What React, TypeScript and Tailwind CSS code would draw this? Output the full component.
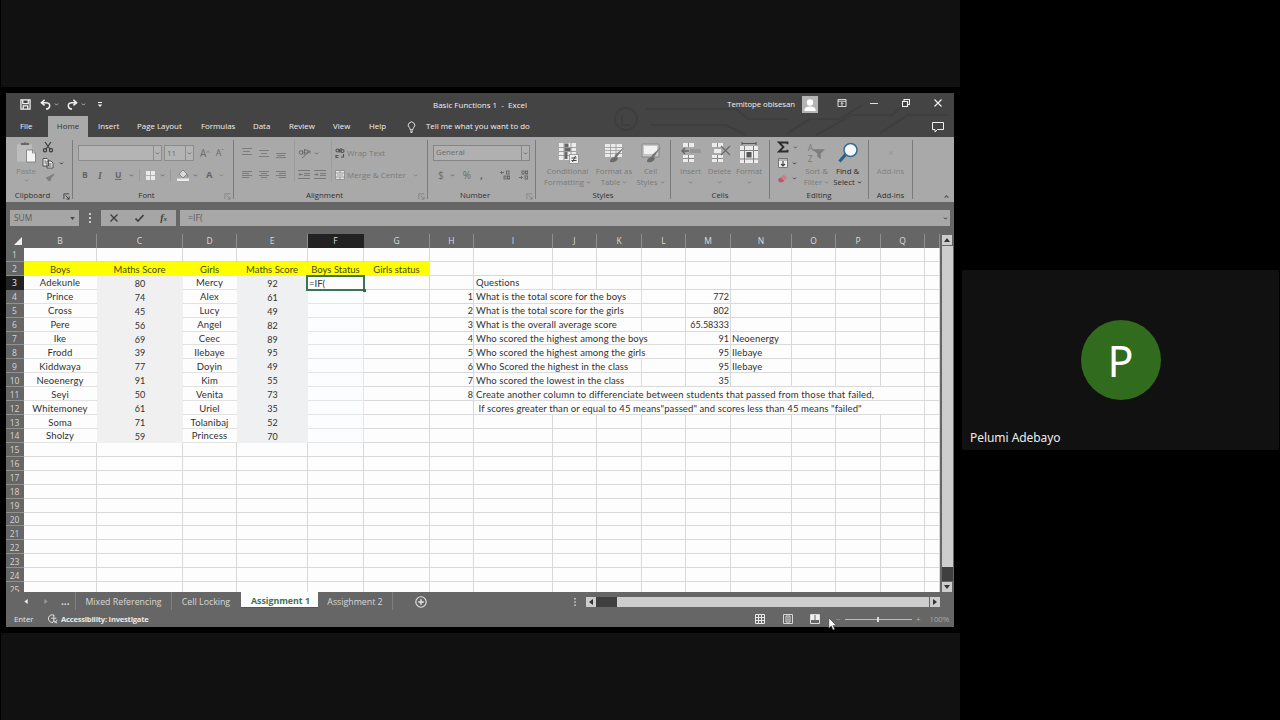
import React from "react";
import type { ReactNode } from "react";

type Column = { id: string; w: number };

const COLUMNS: Column[] = [
  { id: "B", w: 73 },
  { id: "C", w: 86 },
  { id: "D", w: 54 },
  { id: "E", w: 71 },
  { id: "F", w: 56 },
  { id: "G", w: 66 },
  { id: "H", w: 44 },
  { id: "I", w: 79 },
  { id: "J", w: 44 },
  { id: "K", w: 45 },
  { id: "L", w: 44 },
  { id: "M", w: 45 },
  { id: "N", w: 61 },
  { id: "O", w: 44 },
  { id: "P", w: 45 },
  { id: "Q", w: 44 },
  { id: "R", w: 15 },
];

const SCORES: [string, number, string, number][] = [
  ["Adekunle", 80, "Mercy", 92],
  ["Prince", 74, "Alex", 61],
  ["Cross", 45, "Lucy", 49],
  ["Pere", 56, "Angel", 82],
  ["Ike", 69, "Ceec", 89],
  ["Frodd", 39, "Ilebaye", 95],
  ["Kiddwaya", 77, "Doyin", 49],
  ["Neoenergy", 91, "Kim", 55],
  ["Seyi", 50, "Venita", 73],
  ["Whitemoney", 61, "Uriel", 35],
  ["Soma", 71, "Tolanibaj", 52],
  ["Sholzy", 59, "Princess", 70],
];

const HEADERS: Record<string, string> = {
  B: "Boys",
  C: "Maths Score",
  D: "Girls",
  E: "Maths Score",
  F: "Boys Status",
  G: "Girls status",
};

type Question = { no?: string; text: string; span: number; m?: string; n?: string };

const QUESTIONS: Record<number, Question> = {
  3: { text: "Questions", span: 1 },
  4: { no: "1", text: "What is the total score for the boys", span: 3, m: "772" },
  5: { no: "2", text: "What is the total score for the girls", span: 3, m: "802" },
  6: { no: "3", text: "What is the overall average score", span: 3, m: "65.58333" },
  7: { no: "4", text: "Who scored the highest among the boys", span: 4, m: "91", n: "Neoenergy" },
  8: { no: "5", text: "Who scored the highest among the girls", span: 4, m: "95", n: "Ilebaye" },
  9: { no: "6", text: "Who Scored the highest in the class", span: 3, m: "95", n: "Ilebaye" },
  10: { no: "7", text: "Who scored the lowest in the class", span: 3, m: "35" },
  11: {
    no: "8",
    text: "Create another column to differenciate between students that passed from those that failed,",
    span: 9,
  },
  12: {
    text: ' If scores greater than or equal to 45 means"passed" and scores less than 45 means "failed"',
    span: 9,
  },
};

function cellFor(id: string, row: number): { text: string; cls: string } {
  const line = "border-r border-b border-[#d9d9d9] ";
  const num = "text-[9px] tracking-normal ";
  if (row === 2 && HEADERS[id]) return { text: HEADERS[id], cls: "justify-center bg-[#ffff00] pr-px tracking-normal text-[#4a4a10]" };
  const s = row >= 3 && row <= 14 ? SCORES[row - 3] : undefined;
  if (s) {
    if (id === "B") return { text: s[0], cls: "justify-center border-b border-[#e2e2e2] pr-px" };
    if (id === "C") return { text: String(s[1]), cls: num + "justify-center bg-[#f0f0f0]" };
    if (id === "D") return { text: s[2], cls: "justify-center border-b border-[#e2e2e2] pr-px" };
    if (id === "E") return { text: String(s[3]), cls: num + "justify-center bg-[#eff0f1]" };
    if (id === "F" && row === 3) return { text: "=IF(", cls: "pl-px tracking-normal" };
    if (id === "F") return { text: "", cls: "border-r border-b border-[#e3e6e7] bg-[#fcfdfe]" };
  }
  const q = QUESTIONS[row];
  if (q) {
    if (id === "H") return { text: q.no ?? "", cls: line + num + "justify-end" };
    if (id === "M" && q.span < 5) return { text: q.m ?? "", cls: line + num + "justify-end pr-px" };
    if (id === "N" && q.span < 5) return { text: q.n ?? "", cls: line + "pl-px" };
  }
  return { text: "", cls: line };
}

function SheetRow({ row }: { row: number }) {
  const q = QUESTIONS[row];
  const cells: ReactNode[] = [];
  for (let i = 0; i < COLUMNS.length; i++) {
    const c = COLUMNS[i];
    if (c.id === "I" && q) {
      let w = 0;
      for (let k = 0; k < q.span; k++) w += COLUMNS[i + k].w;
      cells.push(
        <div
          key={c.id}
          style={{ width: w }}
          className={
            "flex shrink-0 items-center border-r border-b border-[#dcdcdc] pt-[2px] pl-[2px] whitespace-pre " +
            (row === 11 ? "tracking-[0.16px]" : "tracking-[0.1px]")
          }
        >
          {q.text}
        </div>
      );
      i += q.span - 1;
      continue;
    }
    const cell = cellFor(c.id, row);
    const active = c.id === "F" && row === 3;
    cells.push(
      <div
        key={c.id}
        style={{ width: c.w }}
        className={"relative flex shrink-0 items-center pt-[2px] whitespace-pre " + (active ? "z-10 " : "") + cell.cls}
      >
        {cell.text}
        {active && (
          <div className="absolute -top-px -left-[2px] h-[16px] w-[59px] border-2 border-[#3a7556]">
            <div className="absolute -right-[3px] -bottom-[3px] size-[3px] bg-[#2e6b4a]" />
          </div>
        )}
      </div>
    );
  }
  return (
    <div className="flex h-[13.93px] shrink-0">
      <div
        className={
          "flex w-[18px] shrink-0 items-center justify-center border-b pt-[2px] pr-px font-['Open_Sans',sans-serif] text-[8.5px] tracking-normal " +
          (row === 3 ? "border-[#222] bg-[#222] text-[#e8e8e8]" : "border-[#909090] text-[#d4d4d4]")
        }
      >
        {row}
      </div>
      {cells}
    </div>
  );
}

function Caret({ className = "" }: { className?: string }) {
  return (
    <svg viewBox="0 0 6 4" className={"h-[3px] w-[5px] shrink-0 " + className} fill="none" stroke="currentColor" strokeWidth="1.3">
      <path d="M1 .8 3 2.8 5 .8" />
    </svg>
  );
}

function Group({ className, label, launcher, dim, children }: { className: string; label: string; launcher?: boolean; dim?: boolean; children: ReactNode }) {
  return (
    <div className={"flex h-[65px] shrink-0 flex-col pt-[3px] " + className}>
      <div className="flex h-[59px] flex-1 flex-col border-r border-[#7b7b7b]">
        <div className="h-[49px] shrink-0">{children}</div>
        <div
          className={
            "relative flex h-[12px] items-center justify-center pt-[2px] text-[7.8px] font-medium text-[#303030] " +
            (launcher ? "pr-[13px]" : "")
          }
        >
          {label}
          {launcher && (
            <svg viewBox="0 0 8 8" className={"absolute right-[2px] bottom-px size-[7px] " + (dim ? "text-[#828282]" : "text-[#3d3d3d]")} fill="none" stroke="currentColor" strokeWidth="1">
              <path d="M1 7V1h6M3 3l4 4M7 4v3H4" />
            </svg>
          )}
        </div>
      </div>
      <div className="h-[3px]" />
    </div>
  );
}

function BigButton({ icon, lines, className, caret, dark }: { icon: ReactNode; lines: string[]; className: string; caret?: boolean; dark?: boolean }) {
  return (
    <div className={"flex shrink-0 flex-col items-center text-[7.8px] leading-[11px] " + className + (dark ? " text-[#2c2c2c]" : " text-[#7a7a7a]")}>
      <div className="flex h-[26px] items-center justify-center">{icon}</div>
      {lines.map((l, i) => (
        <div key={l} className="flex items-center gap-[2px] whitespace-nowrap">
          {l}
          {caret && i === lines.length - 1 && lines.length > 1 && <Caret />}
        </div>
      ))}
      {caret && lines.length === 1 && <Caret className="mt-[4px]" />}
    </div>
  );
}

function Lines({ rows }: { rows: [number, number, number][] }) {
  return (
    <svg viewBox="0 0 12 12" className="size-[12px] shrink-0 text-[#7c7c7c]" stroke="currentColor" strokeWidth="1">
      {rows.map(([x, y, w]) => (
        <path key={y} d={`M${x} ${y}h${w}`} />
      ))}
    </svg>
  );
}

function Indent({ right }: { right?: boolean }) {
  return (
    <svg viewBox="0 0 12 12" className="size-[12px] shrink-0 text-[#7a7a7a]" fill="none" stroke="currentColor" strokeWidth="1">
      <path d="M0 1.5h12M6 4.5h6M6 6.5h6M0 9.5h12" />
      <path d={right ? "M0 5.5h4M2.5 4l1.5 1.5L2.5 7" : "M5 5.5H1M2.5 4 1 5.5 2.500 7"} />
    </svg>
  );
}

function Ribbon() {
  return (
    <div className="flex h-[65px] shrink-0 bg-[#a9a9a9] text-[#6a6a6a]">
      <Group className="w-[67px]" label="Clipboard" launcher>
        <div className="flex">
          <div className="ml-[9px] flex w-[22px] flex-col items-center">
            <svg viewBox="0 0 22 24" className="h-[25px] w-[22px]">
              <rect x="2" y="4" width="15" height="17" fill="#bdbdbd" />
              <path d="M6 4.5V2.5h2.5a2 2 0 0 1 3 0H14v2z" fill="#666" />
              <path d="M11.5 9.5h6l3 3v9h-9z" fill="#f3f3f3" stroke="#777" strokeWidth=".8" />
              <path d="M17.5 9.5v3h3" fill="none" stroke="#777" strokeWidth=".8" />
            </svg>
            <span className="text-[7.8px] leading-[12px] text-[#828282]">Paste</span>
            <Caret className="mt-[2px] text-[#858585]" />
          </div>
          <div className="ml-[5px] flex flex-col gap-[4px]">
            <svg viewBox="0 0 12 12" className="mt-px size-[12px]" fill="none" stroke="#3c3c3c" strokeWidth="1.2">
              <path d="M3 1l5 7M9 1 4 8" />
              <circle cx="3" cy="9.3" r="1.6" />
              <circle cx="9" cy="9.3" r="1.6" />
            </svg>
            <div className="flex items-center gap-[5px]">
              <svg viewBox="0 0 12 12" className="size-[12px]" fill="#eee" stroke="#444" strokeWidth=".9">
                <path d="M1 1.5h4l1.5 1.5v6H1zM5 4h4l2 2v5H5z" />
                <path d="M6.500 7h3M6.500 9h3M2.500 4h1.500M2.500 6h1.500" />
              </svg>
              <Caret className="text-[#333]" />
            </div>
            <svg viewBox="0 0 12 12" className="ml-[3px] size-[10px]">
              <path d="m1 5 4-1 5-3 1.500 1-4 4-1 4-3-1z" fill="#7e7e7e" />
            </svg>
          </div>
        </div>
      </Group>

      <Group className="w-[161px]" label="Font" launcher dim>
        <div className="flex h-[26px] items-center pl-[5px]">
          <div className="flex h-[16px] w-[84px] border border-[#8c8c8c] bg-[#b4b4b4]">
            <div className="ml-auto flex w-[8px] items-center justify-center border-l border-[#8c8c8c]">
              <Caret />
            </div>
          </div>
          <div className="ml-[2px] flex h-[16px] w-[30px] items-center border border-[#8c8c8c] bg-[#b4b4b4] pl-[2px] text-[8px]">
            11
            <div className="ml-auto flex h-full w-[8px] items-center justify-center border-l border-[#8c8c8c]">
              <Caret />
            </div>
          </div>
          <span className="ml-[6px] text-[10px]">A<sup className="text-[6px]">^</sup></span>
          <span className="ml-[6px] text-[9px]">A<sup className="text-[6px]">ˇ</sup></span>
        </div>
        <div className="flex h-[18px] items-center pl-[5px] text-[8.500px] font-bold text-[#666]">
          <span className="ml-[4px] w-[16px]">B</span>
          <span className="w-[17px] font-['Liberation_Serif',serif] text-[10px] italic">I</span>
          <span className="w-[14px] underline">U</span>
          <Caret />
          <span className="ml-[5px] h-[12px] w-px bg-[#999]" />
          <svg viewBox="0 0 10 10" className="ml-[6px] size-[9px]">
            <path d="M0 0h10v10H0z" fill="#e9e9e9" />
            <path d="M5 0v10M0 5h10" stroke="#aaa" />
          </svg>
          <Caret className="ml-[5px]" />
          <span className="ml-[5px] h-[12px] w-px bg-[#999]" />
          <svg viewBox="0 0 12 12" className="ml-[6px] size-[12px]">
            <path d="m2 5 4-4 4 4-4 4z" fill="#d9d9d9" stroke="#777" strokeWidth=".8" />
            <path d="M10 5q2 2 1 3t-1-3" fill="#777" />
            <path d="M0 9.500h12V12H0z" fill="#ebebeb" />
          </svg>
          <Caret className="ml-[4px]" />
          <span className="ml-[8px] text-[9.500px]">A</span>
          <Caret className="ml-[6px] opacity-60" />
        </div>
      </Group>

      <Group className="w-[194px] pl-[1px]" label="Alignment" launcher dim>
        <div className="flex">
          <div className="ml-[6px] w-[51px]">
            <div className="flex h-[26px] items-center gap-[5px]">
              <Lines rows={[[1, 1.5, 10], [2, 4.5, 7], [1, 7.5, 10]]} />
              <Lines rows={[[1, 3.5, 10], [3, 6.5, 6], [1, 9.5, 10]]} />
              <Lines rows={[[1, 6.5, 10], [2, 8.5, 8], [1, 10.5, 10]]} />
            </div>
            <div className="flex h-[18px] items-center gap-[5px]">
              <Lines rows={[[1, 2.5, 10], [1, 4.5, 7], [1, 6.5, 10], [1, 8.5, 7]]} />
              <Lines rows={[[1, 2.5, 10], [3, 4.5, 6], [1, 6.5, 10], [3, 8.5, 6]]} />
              <Lines rows={[[1, 2.5, 10], [4, 4.5, 7], [1, 6.5, 10], [4, 8.5, 7]]} />
            </div>
          </div>
          <div className="ml-[2px] h-[42px] w-px bg-[#9c9c9c]" />
          <div className="ml-[3px] w-[31px]">
            <div className="flex h-[26px] items-center">
              <svg viewBox="0 0 13 12" className="h-[12px] w-[13px]" fill="none" stroke="#6c6c6c" strokeWidth="1">
                <circle cx="3" cy="5.500" r="1.800" />
                <path d="M4.800 3.500v4M6.500 2v5.500" />
                <circle cx="8.200" cy="4.500" r="1.700" />
                <path d="m4 11 7.500-6.500M9.500 4h2.500v2.500" />
              </svg>
              <Caret className="ml-[3px]" />
            </div>
            <div className="flex h-[18px] items-center gap-[4px]">
              <Indent />
              <Indent right />
            </div>
          </div>
          <div className="ml-[2px] h-[42px] w-px bg-[#9c9c9c]" />
          <div className="ml-[3px] text-[8px] text-[#7a7a7a]">
            <div className="flex h-[26px] items-center">
              <svg viewBox="0 0 10 12" className="h-[12px] w-[10px]" fill="none" stroke="#555" strokeWidth="1.200">
                <circle cx="2.500" cy="3.500" r="1.500" />
                <path d="M4.500 2v3.500M6 1v4.500M3.500 8.500H1v2h2.500M6 10h2.500V7" />
                <circle cx="7.500" cy="4" r="1.500" />
              </svg>
              <span className="ml-[2px]">Wrap Text</span>
            </div>
            <div className="flex h-[18px] items-center">
              <svg viewBox="0 0 10 10" className="size-[10px]" stroke="#888" strokeWidth=".8">
                <path d="M.5.5h9v9h-9z" fill="#e6e6e6" />
                <path d="M0 3h10M0 7h10M5 0v3M5 7v3M2 5h6" />
              </svg>
              <span className="ml-[2px]">Merge &amp; Center</span>
              <Caret className="ml-[7px]" />
            </div>
          </div>
        </div>
      </Group>

      <Group className="w-[108px]" label="Number" launcher dim>
        <div className="flex h-[26px] items-center pl-[5px]">
          <div className="flex h-[16px] w-[97px] items-center border border-[#858585] bg-[#b0b0b0] pl-[2px] text-[7.8px]">
            General
            <div className="ml-auto flex h-full w-[8px] items-center justify-center border-l border-[#858585]">
              <Caret />
            </div>
          </div>
        </div>
        <div className="flex h-[18px] items-center pl-[5px] text-[10px]">
          <span className="ml-[5px]">$</span>
          <Caret className="ml-[6px]" />
          <span className="ml-[8px]">%</span>
          <span className="ml-[9px] font-bold">,</span>
          <svg viewBox="0 0 11 10" className="ml-[17px] h-[10px] w-[11px]" fill="none" stroke="currentColor">
            <path d="M4 2.500H.5M2 1 .5 2.500 2 4" />
            <rect x="6.500" y="1" width="2.500" height="3" />
            <rect x="4" y="6" width="2" height="3" />
            <rect x="7.500" y="6" width="2" height="3" />
          </svg>
          <svg viewBox="0 0 11 10" className="ml-[7px] h-[10px] w-[11px]" fill="none" stroke="currentColor">
            <rect x="4" y="1" width="2" height="3" />
            <rect x="7.500" y="1" width="2" height="3" />
            <path d="M1 7.500h3.500M3 6l1.500 1.500L3 9" />
            <rect x="7" y="6" width="2.500" height="3" />
          </svg>
        </div>
      </Group>

      <Group className="w-[135px]" label="Styles">
        <div className="flex">
          <BigButton
            className="ml-[7px] w-[49px]"
            caret
            lines={["Conditional", "Formatting"]}
            icon={
              <svg viewBox="0 0 22 22" className="size-[22px]">
                <path d="M2 1h17v17H2z" fill="#ececec" />
                <path d="M2 5.500h17M2 9.500h17M2 13.500h17M7 1v17M14 1v17" stroke="#8a8a8a" strokeWidth=".8" />
                <path d="M7.500 1.500h4v3.500h-4zM7.500 6h6v3h-6zM7.500 10h3v7h-3z" fill="#666" />
                <path d="M12.500 12.500h9v9h-9z" fill="#eee" stroke="#888" strokeWidth=".8" />
                <path d="M14.500 16h5M14.500 18.500h5M18.500 14l-3 6" stroke="#444" />
              </svg>
            }
          />
          <BigButton
            className="w-[44px]"
            caret
            lines={["Format as", "Table"]}
            icon={
              <svg viewBox="0 0 22 22" className="size-[22px]">
                <path d="M2 2h17v13H2z" fill="#eaeaea" />
                <path d="M2 5.500h17M2 8.500h17M2 11.500h17M7.500 2v13M13 2v13" stroke="#999" strokeWidth=".8" />
                <path d="m21 5-7 10-3 1 1-3z" fill="#777" />
                <path d="M7 19q1-4 6-4l2 1q-1 5-8 4" fill="#6b6b6b" />
              </svg>
            }
          />
          <BigButton
            className="w-[29px]"
            caret
            lines={["Cell", "Styles"]}
            icon={
              <svg viewBox="0 0 22 22" className="size-[22px]">
                <path d="M2 2h17v13H2z" fill="#c6c6c6" stroke="#888" />
                <path d="M4 4h13v8H4z" fill="#f1f1f1" />
                <path d="m21 5-7 10-3 1 1-3z" fill="#777" />
                <path d="M7 19q1-4 6-4l2 1q-1 5-8 4" fill="#6b6b6b" />
              </svg>
            }
          />
        </div>
      </Group>

      <Group className="w-[99px]" label="Cells">
        <div className="flex">
          <BigButton
            className="ml-[5px] w-[29px]"
            caret
            lines={["Insert"]}
            icon={
              <svg viewBox="0 0 22 22" className="size-[22px]">
                <path d="M3 1h11v4H3zM3 13h11v7H3z" fill="#ececec" />
                <path d="M8.500 1v4M8.500 13v7M3 16.500h11" stroke="#888" />
                <path d="M10 7h11v4H10z" fill="#979797" />
                <path d="M9 9H2m3-3L2 9l3 3" fill="none" stroke="#666" strokeWidth="1.300" />
              </svg>
            }
          />
          <BigButton
            className="w-[29px]"
            caret
            lines={["Delete"]}
            icon={
              <svg viewBox="0 0 22 22" className="size-[22px]">
                <path d="M3 1h11v4H3zM3 13h11v7H3zM5 7h7v4H5z" fill="#ececec" />
                <path d="M8.500 1v4M8.500 13v7M3 16.500h11" stroke="#888" />
                <path d="m12 4 9 9M21 4l-9 9" stroke="#6a6a6a" strokeWidth="1.300" />
              </svg>
            }
          />
          <BigButton
            className="w-[30px]"
            caret
            lines={["Format"]}
            icon={
              <svg viewBox="0 0 22 22" className="size-[22px]">
                <path d="M2 4h18v17H2z" fill="#ececec" />
                <path d="M6.500 4v17M15.500 4v17M2 8.500h18M2 17h18" stroke="#808080" />
                <path d="M8.500 10h5v5.500h-5z" fill="#555" />
                <path d="M4 1.500h14M4 0v3M18 0v3" stroke="#555" />
              </svg>
            }
          />
        </div>
      </Group>

      <Group className="w-[99px]" label="Editing">
        <div className="flex">
          <div className="ml-[7px] flex w-[22px] flex-col text-[#333]">
            <div className="flex h-[14px] items-center">
              <svg viewBox="0 0 12 12" className="size-[12px]" fill="none" stroke="#2c2c2c" strokeWidth="1.800">
                <path d="M10.500 3.200V1.500H2L6.500 6 2 10.500h8.500V8.800" />
              </svg>
              <Caret className="ml-[4px] text-[#555]" />
            </div>
            <div className="flex h-[18px] items-center">
              <svg viewBox="0 0 10 10" className="ml-px size-[10px]">
                <path d="M.5.5h9v9h-9z" fill="#efefef" stroke="#777" />
                <path d="M1 2h8" stroke="#777" />
                <path d="M5 3v5M3 6l2 2 2-2" fill="none" stroke="#444" strokeWidth="1.200" />
              </svg>
              <Caret className="ml-[4px]" />
            </div>
            <div className="flex h-[13px] items-center">
              <svg viewBox="0 0 10 10" className="size-[11px]">
                <path d="m1 6 5-4.500L9.500 4 5 8.500H2z" fill="#cf7d8c" />
                <path d="m1 6 2-2 3.500 3L5 8.500H2z" fill="#b5596c" />
              </svg>
              <Caret className="ml-[4px] text-[#444]" />
            </div>
          </div>
          <BigButton
            className="ml-[2px] w-[31px]"
            caret
            lines={["Sort &", "Filter"]}
            icon={
              <div className="flex items-center">
                <span className="text-[8.500px] leading-[11px]">A<br />Z</span>
                <svg viewBox="0 0 12 12" className="-ml-px size-[13px]">
                  <path d="M0 2h12L8 6v5L5 9V6z" fill="#7c7c7c" />
                </svg>
              </div>
            }
          />
          <BigButton
            className="w-[31px]"
            caret
            dark
            lines={["Find &", "Select"]}
            icon={
              <svg viewBox="0 0 22 22" className="size-[22px]">
                <path d="m9 12-6.500 7.500" stroke="#2e6086" strokeWidth="3" />
                <circle cx="13.500" cy="8" r="6.500" fill="#f6f8f9" stroke="#356a92" strokeWidth="1.500" />
              </svg>
            }
          />
        </div>
      </Group>

      <Group className="w-[44px]" label="Add-ins">
        <BigButton
          className="w-[43px] opacity-80"
          lines={["Add-ins"]}
          icon={
            <svg viewBox="0 0 12 12" className="size-[10px]">
              <path d="M4 4h4v4H4z" fill="#999" />
            </svg>
          }
        />
      </Group>
      <div className="flex flex-1 items-end justify-end pr-[5px] pb-[4px]">
        <Caret className="rotate-180 scale-125 text-[#555]" />
      </div>
    </div>
  );
}

function TitleBar() {
  return (
    <div className="relative flex h-[23px] shrink-0 items-center text-[#f0f0f0]">
      <svg viewBox="0 0 12 12" className="ml-[14px] size-[11px]" fill="none" stroke="currentColor" strokeWidth="1.400">
        <path d="M1 1h10v10H1zM3 1v4h6V1M3.500 11V7.500h5V11" />
      </svg>
      <svg viewBox="0 0 12 12" className="ml-[9px] size-[11px]" fill="none" stroke="currentColor" strokeWidth="1.600">
        <path d="M5 1 1.500 4 5 7M2 4h5q4 .5 3.500 4Q10 11 6.500 11" />
      </svg>
      <Caret className="ml-[3px] opacity-70" />
      <svg viewBox="0 0 12 12" className="ml-[8px] size-[11px]" fill="none" stroke="currentColor" strokeWidth="1.600">
        <path d="m7 1 3.500 3L7 7M10 4H5Q1 4.500 1.500 8 2 11 5.500 11" />
      </svg>
      <Caret className="ml-[3px] opacity-70" />
      <svg viewBox="0 0 6 6" className="ml-[11px] size-[6px]" fill="currentColor">
        <path d="M1 0h4v1H1zM.8 2.500h4.400L3 5z" />
      </svg>
      <span className="ml-[330px] w-[98px] text-[8px] whitespace-pre">Basic Functions 1  -  Excel</span>
      <span className="ml-auto pt-px text-[7.8px] font-medium tracking-[-0.06px] whitespace-nowrap">Temitope obisesan</span>
      <svg viewBox="0 0 16 17" className="ml-[7px] h-[17px] w-[16px]">
        <path d="M0 0h16v17H0z" fill="#b4b4b4" />
        <circle cx="8" cy="6.500" r="3.200" fill="#fff" />
        <path d="M2.500 15v-1.500Q3 10.500 8 10.500t5.500 3V15z" fill="#fff" />
      </svg>
      <svg viewBox="0 0 10 9" className="mb-[3px] ml-[19px] h-[8px] w-[10px]" fill="none" stroke="currentColor">
        <path d="M.5.5h9v8h-9zM.5 2.500h9M5 8V4M3.500 5.500 5 4l1.500 1.500" />
      </svg>
      <span className="mb-[3px] ml-[23px] h-px w-[8px] bg-[#ddd]" />
      <svg viewBox="0 0 8 8" className="mb-[3px] ml-[24px] size-[8px]" fill="none" stroke="currentColor" strokeWidth="1.100">
        <path d="M.5 2.500h5v5h-5zM2 2.500v-2h5.500v5h-2" />
      </svg>
      <svg viewBox="0 0 8 8" className="mr-[12px] mb-[3px] ml-[24px] size-[8px]" fill="none" stroke="currentColor" strokeWidth="1.200">
        <path d="m.5.5 7 7M7.500.5l-7 7" />
      </svg>
    </div>
  );
}

function MenuTabs() {
  return (
    <div className="flex h-[21px] shrink-0 items-center text-[7.900px] font-medium whitespace-nowrap text-[#f0f0f0]">
      <span className="w-[42px] pl-[14px]">File</span>
      <span className="flex h-[21px] w-[40px] items-center justify-center bg-[#a9a9a9] text-[#333]">Home</span>
      <span className="w-[39px] pl-[10px]">Insert</span>
      <span className="w-[64px] pl-[10px]">Page Layout</span>
      <span className="w-[53px] pl-[10px]">Formulas</span>
      <span className="w-[35px] pl-[9px]">Data</span>
      <span className="w-[45px] pl-[10px]">Review</span>
      <span className="w-[36px] pl-[9px]">View</span>
      <span className="w-[47px] pl-[9px]">Help</span>
      <svg viewBox="0 0 9 13" className="h-[12px] w-[9px]" fill="none" stroke="currentColor">
        <path d="M3 9.500Q3 8 2 7a3.500 3.500 0 1 1 5 0Q6 8 6 9.500zM3 11h3M3.500 12.500h2" />
      </svg>
      <span className="ml-[10px]">Tell me what you want to do</span>
      <svg viewBox="0 0 12 12" className="mr-[10px] ml-auto size-[12px]" fill="none" stroke="currentColor">
        <path d="M.5 1.500h11v7h-6l-2.500 2.500v-2.500h-2.500z" />
      </svg>
    </div>
  );
}

function FormulaBar() {
  return (
    <div className="flex h-[32px] shrink-0 items-center pl-[4px] text-[8px] text-[#5c5c5c]">
      <div className="flex h-[16px] w-[69px] items-center justify-between bg-[#a6a6a6] pr-[4px] pl-[4px] text-[8.400px]">
        SUM
        <svg viewBox="0 0 6 4" className="h-[3px] w-[5px]"><path d="M0 0h6L3 4z" fill="#444" /></svg>
      </div>
      <svg viewBox="0 0 2 10" className="ml-[10px] h-[10px] w-[2px]"><path d="M0 0h2v2H0zM0 4h2v2H0zM0 8h2v2H0z" fill="#ccc" /></svg>
      <div className="ml-[10px] flex h-[16px] w-[75px] items-center justify-between bg-[#a6a6a6] px-[9px] text-[#3e3e3e]">
        <svg viewBox="0 0 8 8" className="size-[8px]" fill="none" stroke="currentColor" strokeWidth="1.400"><path d="m.5.5 7 7M7.500.5l-7 7" /></svg>
        <svg viewBox="0 0 9 8" className="h-[8px] w-[9px]" fill="none" stroke="currentColor" strokeWidth="1.600"><path d="m.5 4.500 2.500 2.500L8.500 1" /></svg>
        <span className="font-['Liberation_Serif',serif] text-[10px] leading-[12px] font-bold italic">f<span className="text-[7px]">x</span></span>
      </div>
      <div className="ml-[4px] flex h-[16px] w-[770px] items-center justify-between bg-[#a8a8a8] pr-[2px] pl-[8px]">
        <span className="pt-[2px] text-[8.800px]">=IF(</span>
        <Caret className="text-[#333]" />
      </div>
    </div>
  );
}

function Sheet() {
  return (
    <div className="flex h-[358px] shrink-0">
      <div className="flex h-[358px] w-[934px] shrink-0 flex-col overflow-hidden">
        <div className="flex h-[14px] shrink-0 text-[8.5px] text-[#dcdcdc]">
          <div className="flex w-[18px] items-end justify-end pr-[2px] pb-[3px]">
            <svg viewBox="0 0 8 8" className="size-[8px]"><path d="M8 0v8H0z" fill="#eee" /></svg>
          </div>
          {COLUMNS.map((c) => (
            <div
              key={c.id}
              style={{ width: c.w }}
              className={
                "flex shrink-0 items-center justify-center border-r " +
                (c.id === "F" ? "border-r-[#222] bg-[#222]" : "border-[#8f8f8f]")
              }
            >
              {c.id === "R" ? "" : c.id}
            </div>
          ))}
        </div>
        <div className="relative flex flex-col font-['Lato',sans-serif] text-[9.500px] leading-[12px] tracking-[0.12px] text-[#303030]">
          <div className="absolute inset-y-0 right-0 left-[18px] bg-[#fdfdfd]" />
          <div className="relative flex flex-col">
            {Array.from({ length: 25 }, (_, i) => (
              <SheetRow key={i} row={i + 1} />
            ))}
          </div>
        </div>
      </div>
      <div className="ml-[2px] flex w-[11px] flex-col pt-[1px]">
        <ScrollButton d="M5 3 8 7H2z" />
        <div className="mt-px h-[321px] bg-[#cdcdcd]" />
        <div className="h-[14px] bg-[#3f3f3f]" />
        <div className="mt-px"><ScrollButton d="M5 7 2 3h6z" /></div>
      </div>
    </div>
  );
}

function ScrollButton({ d }: { d: string }) {
  return (
    <svg viewBox="0 0 10 10" className="size-[10px] shrink-0">
      <path d="M0 0h10v10H0z" fill="#cdcdcd" />
      <path d={d} fill="#333" />
    </svg>
  );
}

function SheetTabs() {
  return (
    <div className="flex h-[19px] shrink-0 items-start text-[8.8px] whitespace-nowrap text-[#d8d8d8]">
      <div className="flex h-[18px] w-[70px] items-center border-r border-[#808080] pt-px">
        <svg viewBox="0 0 4 6" className="ml-[18px] h-[5px] w-[4px]"><path d="M4 0v6L0 3z" fill="#eee" /></svg>
        <svg viewBox="0 0 4 6" className="ml-[16px] h-[5px] w-[4px]"><path d="M0 0v6l4-3z" fill="#999" /></svg>
        <span className="ml-[13px] text-[10px] font-bold">...</span>
      </div>
      <div className="flex h-[18px] w-[96px] items-center justify-center border-r border-[#808080] pt-[3px]">Mixed Referencing</div>
      <div className="flex h-[18px] w-[69px] items-center justify-center pt-[3px] pr-px">Cell Locking</div>
      <div className="flex h-[16px] w-[77px] items-center justify-center border-b border-[#217346] bg-[#fdfdfd] pt-[4px] pl-[2px] font-bold text-[#3b7355]">Assignment 1</div>
      <div className="flex h-[18px] w-[75px] items-center justify-center border-r border-[#808080] pt-[3px]">Assighment 2</div>
      <svg viewBox="0 0 12 12" className="mt-[4px] ml-[22px] size-[12px]" fill="none" stroke="#e4e4e4" strokeWidth="1.100">
        <circle cx="6" cy="6" r="5.200" />
        <path d="M6 3.200v5.600M3.200 6h5.600" strokeWidth="1.500" />
      </svg>
      <div className="mt-[5px] ml-auto flex h-[10px] items-center">
        <svg viewBox="0 0 2 10" className="mr-[10px] h-[8px] w-[2px]"><path d="M0 0h2v2H0zM0 4h2v2H0zM0 8h2v2H0z" fill="#ccc" /></svg>
        <ScrollButton d="M3 5 7 2v6z" />
        <div className="h-[10px] w-[21px] bg-[#3f3f3f]" />
        <div className="mr-px h-[10px] w-[312px] bg-[#cdcdcd]" />
        <ScrollButton d="M7 5 3 2v6z" />
      </div>
      <div className="w-[14px]" />
    </div>
  );
}

function StatusBar() {
  return (
    <div className="flex h-[16px] shrink-0 items-center text-[7.8px] whitespace-nowrap text-[#e8e8e8]">
      <span className="w-[34px] pt-px pl-[8px]">Enter</span>
      <svg viewBox="0 0 12 12" className="ml-[8px] size-[10px]" fill="none" stroke="currentColor" strokeWidth="1.200">
        <path d="M7 1.500A4.500 4.500 0 1 0 4.500 10M7 1v3M4 5h6M7 5v3l-2 3M7 8l4 3M8 11l3-4" />
      </svg>
      <span className="ml-[3px] pt-px text-[7.600px] font-bold tracking-[-0.22px]">Accessibility: Investigate</span>
      <svg viewBox="0 0 10 10" className="ml-auto size-[10px]" fill="none" stroke="currentColor">
        <path d="M.5.500h9v9h-9zM3.500 0v10M6.500 0v10M0 3.500h10M0 6.500h10" />
      </svg>
      <svg viewBox="0 0 10 10" className="ml-[18px] size-[10px]" fill="none" stroke="#d8d8d8">
        <path d="M.5.5h9v9h-9zM3 2v6h4V2zM5 3v4" />
      </svg>
      <svg viewBox="0 0 10 10" className="ml-[17px] size-[10px]">
        <path d="M.5.5h9v9h-9z" fill="none" stroke="#ddd" />
        <path d="M1 1h3.500v5H1zM5.500 1H9v5H5.500z" fill="#eee" />
      </svg>
      <span className="ml-[16px] h-px w-[4px] bg-[#888]" />
      <div className="ml-[5px] flex h-[6px] w-[67px] items-center">
        <span className="h-px w-[32px] bg-[#bbb]" />
        <span className="h-[5px] w-[2px] bg-[#ddd]" />
        <span className="h-px flex-1 bg-[#bbb]" />
      </div>
      <span className="ml-[4px] text-[8px] text-[#b5b5b5]">+</span>
      <span className="mr-[5px] ml-[9px] pt-px text-[7.8px] tracking-[-0.1px] text-[#a8a8a8]">100%</span>
    </div>
  );
}

function Circuit() {
  return (
    <svg viewBox="0 0 344 44" className="absolute top-0 right-0 h-[44px] w-[344px]" fill="none" stroke="#3e3e3e" strokeWidth="2">
      <circle cx="16" cy="26" r="11" />
      <path d="M12 22v10h9M36 16h90l12 10h40M40 32h76l20 10M178 40l22-14h30l22-14M206 42l36-20h40l16-14M270 40l28-18h40" />
    </svg>
  );
}

export default function App() {
  return (
    <div className="relative flex h-[720px] w-[1280px] overflow-hidden bg-black font-['Open_Sans','Noto_Sans',sans-serif]">
      <div className="flex w-[960px] shrink-0 flex-col border-l border-black bg-[#111]">
        <div className="mt-[87px] h-[546px] bg-black pt-[6px] pl-[5px]">
          <div className="relative flex h-[534px] w-[948px] flex-col overflow-hidden bg-[#666]">
            <div className="relative h-[44px] shrink-0 bg-[#444]">
              <Circuit />
              <div className="relative">
                <TitleBar />
                <MenuTabs />
              </div>
            </div>
            <Ribbon />
            <FormulaBar />
            <Sheet />
            <SheetTabs />
            <StatusBar />
          </div>
        </div>
      </div>
      <div className="flex w-[320px] shrink-0 items-center pl-[2px]">
        <div className="relative flex h-[180px] w-[317px] items-center justify-center rounded-[2px] bg-[#111]">
          <div className="flex size-[80px] items-center justify-center rounded-full bg-[#316b1d] font-['Noto_Sans',sans-serif] text-[43px] leading-none text-white">
            P
          </div>
          <span className="absolute bottom-[4px] left-[8px] font-['Noto_Sans',sans-serif] text-[12px] leading-[16px] tracking-[-0.05px] text-[#ececec]">Pelumi Adebayo</span>
        </div>
      </div>
      <svg viewBox="0 0 9 14" className="absolute top-[617px] left-[828px] h-[14px] w-[9px]">
        <path d="M.8.8v10.400l2.500-2.200 1.700 4 1.700-.8-1.600-3.800h3.300z" fill="#fff" stroke="#333" strokeWidth=".6" />
      </svg>
    </div>
  );
}
